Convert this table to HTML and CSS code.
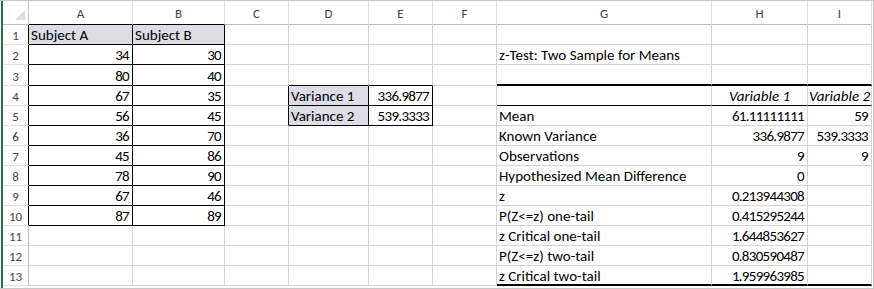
FILE: index.html
```html
<!DOCTYPE html>
<html>
<head>
<meta charset="utf-8">
<link rel="stylesheet" href="styles.css">
</head>
<body>
<div class="frame">
  <div class="green"></div>
  <div class="sheet">
    <!-- header row -->
    <div class="corner"><svg width="10" height="10" viewBox="0 0 10 10"><polygon points="10,0 10,10 0,10" fill="#dcdcdc"/></svg></div>
    <div class="hd bB">A</div>
    <div class="hd bB">B</div>
    <div class="hd">C</div>
    <div class="hd">D</div>
    <div class="hd">E</div>
    <div class="hd">F</div>
    <div class="hd">G</div>
    <div class="hd">H</div>
    <div class="hd">I</div>

    <!-- row 1 -->
    <div class="rh bR">1</div>
    <div class="c fill bR bB">Subject A</div>
    <div class="c fill bR bB">Subject B</div>
    <div class="c"></div><div class="c"></div><div class="c"></div><div class="c"></div><div class="c"></div><div class="c"></div><div class="c"></div>

    <!-- row 2 -->
    <div class="rh bR">2</div>
    <div class="c r num bR bB">34</div>
    <div class="c r num bR bB">30</div>
    <div class="c"></div><div class="c"></div><div class="c"></div><div class="c"></div>
    <div class="c">z-Test: Two Sample for Means</div>
    <div class="c"></div><div class="c"></div>

    <!-- row 3 -->
    <div class="rh bR">3</div>
    <div class="c r num bR bB">80</div>
    <div class="c r num bR bB">40</div>
    <div class="c"></div>
    <div class="c bB"></div>
    <div class="c bB"></div>
    <div class="c"></div>
    <div class="c bB2"></div><div class="c bB2"></div><div class="c bB2"></div>

    <!-- row 4 -->
    <div class="rh bR">4</div>
    <div class="c r num bR bB">67</div>
    <div class="c r num bR bB">35</div>
    <div class="c bR"></div>
    <div class="c fill bR bB">Variance 1</div>
    <div class="c r num bR bB">336.9877</div>
    <div class="c"></div>
    <div class="c bB"></div>
    <div class="c ctr it bB">Variable 1</div>
    <div class="c ctr it bB">Variable 2</div>

    <!-- row 5 -->
    <div class="rh bR">5</div>
    <div class="c r num bR bB">56</div>
    <div class="c r num bR bB">45</div>
    <div class="c bR"></div>
    <div class="c fill bR bB">Variance 2</div>
    <div class="c r num bR bB">539.3333</div>
    <div class="c"></div>
    <div class="c">Mean</div>
    <div class="c r num">61.11111111</div>
    <div class="c r num">59</div>

    <!-- row 6 -->
    <div class="rh bR">6</div>
    <div class="c r num bR bB">36</div>
    <div class="c r num bR bB">70</div>
    <div class="c"></div><div class="c"></div><div class="c"></div><div class="c"></div>
    <div class="c">Known Variance</div>
    <div class="c r num">336.9877</div>
    <div class="c r num">539.3333</div>

    <!-- row 7 -->
    <div class="rh bR">7</div>
    <div class="c r num bR bB">45</div>
    <div class="c r num bR bB">86</div>
    <div class="c"></div><div class="c"></div><div class="c"></div><div class="c"></div>
    <div class="c">Observations</div>
    <div class="c r num">9</div>
    <div class="c r num">9</div>

    <!-- row 8 -->
    <div class="rh bR">8</div>
    <div class="c r num bR bB">78</div>
    <div class="c r num bR bB">90</div>
    <div class="c"></div><div class="c"></div><div class="c"></div><div class="c"></div>
    <div class="c">Hypothesized Mean Difference</div>
    <div class="c r num">0</div>
    <div class="c"></div>

    <!-- row 9 -->
    <div class="rh bR">9</div>
    <div class="c r num bR bB">67</div>
    <div class="c r num bR bB">46</div>
    <div class="c"></div><div class="c"></div><div class="c"></div><div class="c"></div>
    <div class="c">z</div>
    <div class="c r num">0.213944308</div>
    <div class="c"></div>

    <!-- row 10 -->
    <div class="rh bR">10</div>
    <div class="c r num bR bB">87</div>
    <div class="c r num bR bB">89</div>
    <div class="c"></div><div class="c"></div><div class="c"></div><div class="c"></div>
    <div class="c">P(Z&lt;=z) one-tail</div>
    <div class="c r num">0.415295244</div>
    <div class="c"></div>

    <!-- row 11 -->
    <div class="rh">11</div>
    <div class="c"></div><div class="c"></div><div class="c"></div><div class="c"></div><div class="c"></div><div class="c"></div>
    <div class="c">z Critical one-tail</div>
    <div class="c r num">1.644853627</div>
    <div class="c"></div>

    <!-- row 12 -->
    <div class="rh">12</div>
    <div class="c"></div><div class="c"></div><div class="c"></div><div class="c"></div><div class="c"></div><div class="c"></div>
    <div class="c">P(Z&lt;=z) two-tail</div>
    <div class="c r num">0.830590487</div>
    <div class="c"></div>

    <!-- row 13 -->
    <div class="rh">13</div>
    <div class="c"></div><div class="c"></div><div class="c"></div><div class="c"></div><div class="c"></div><div class="c"></div>
    <div class="c bB2">z Critical two-tail</div>
    <div class="c r num bB2">1.959963985</div>
    <div class="c bB2"></div>
  </div>
</div>
</body>
</html>
```
FILE: styles.css
```css
html, body {
  margin: 0;
  padding: 0;
  background: #ffffff;
}

.frame {
  width: 874px;
  height: 289px;
  box-sizing: border-box;
  border-top: 1px solid #c6c6c6;
  border-bottom: 1px solid #c6c6c6;
  border-right: 1px solid #c6c6c6;
  display: flex;
  align-items: flex-start;
  overflow: hidden;
}

.green {
  margin-left: 1px;
  width: 2px;
  align-self: stretch;
  background: #2a6e45;
}

.sheet {
  display: grid;
  grid-template-columns: 26px 104px 92px 64px 80px 64px 64px 215px 96px 64px;
  grid-template-rows: 24px 20px 20px 21px repeat(10, 20px);
  font-family: "Carlito", "Lato", sans-serif;
  color: #000;
}

.sheet > div {
  box-sizing: border-box;
  min-width: 0;
  white-space: nowrap;
  display: flex;
  align-items: flex-end;
}

.corner {
  border-right: 1px solid #c6c6c6;
  border-bottom: 1px solid #bdbdbd;
  justify-content: flex-end;
  padding: 0 3px 4px 0;
}

.corner svg {
  display: block;
}

.hd {
  justify-content: center;
  font-size: 13px;
  line-height: 15px;
  padding-bottom: 3px;
  color: #444;
  border-right: 1px solid #e1e1e1;
  border-bottom: 1px solid #bdbdbd;
}

.rh {
  justify-content: center;
  font-size: 13px;
  line-height: 15px;
  padding-bottom: 1px;
  color: #444;
  border-right: 1px solid #bdbdbd;
  border-bottom: 1px solid #e1e1e1;
}

.c {
  font-size: 15px;
  line-height: 17px;
  padding: 0 3px 0 2px;
  border-right: 1px solid #d4d4d4;
  border-bottom: 1px solid #d4d4d4;
  overflow: visible;
}

.r {
  justify-content: flex-end;
}

.ctr {
  justify-content: center;
  padding: 0;
}

.it {
  font-style: italic;
}

.num {
  letter-spacing: -0.7px;
}

.fill {
  background: #dedde6;
}

.bR {
  border-right-color: #000 !important;
}

.bB {
  border-bottom-color: #000 !important;
}

.bB2 {
  border-bottom: 2px solid #000 !important;
  line-height: 15px;
}
```
